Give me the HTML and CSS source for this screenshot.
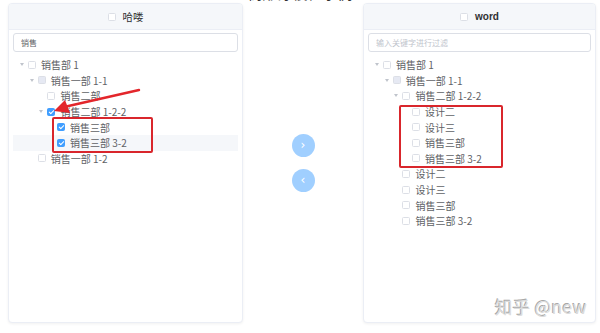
FILE: index.html
```html
<!DOCTYPE html>
<html lang="zh-CN">
<head>
    <meta charset="UTF-8">
    <title>树形穿梭框</title>
    <link rel="stylesheet" href="styles.css">
</head>
<body>
<div class="page">
    <div class="title"><span>树形穿梭框示例</span></div>

    <div class="transfer">
        <div class="panel panel-left">
            <div class="panel-header">
                <span class="cb"></span>
                <span class="header-text">哈喽</span>
            </div>
            <div class="panel-body">
                <div class="filter"><input type="text" value="销售"></div>
                <div class="tree">
                    <div class="node lv1"><span class="caret"></span><span class="cb"></span><span class="label">销售部 1</span></div>
                    <div class="node lv2"><span class="caret"></span><span class="cb half"></span><span class="label">销售一部 1-1</span></div>
                    <div class="node lv3"><span class="caret leaf"></span><span class="cb"></span><span class="label">销售二部</span></div>
                    <div class="node lv3"><span class="caret"></span><span class="cb checked"></span><span class="label">销售二部 1-2-2</span></div>
                    <div class="node lv4"><span class="caret leaf"></span><span class="cb checked"></span><span class="label">销售三部</span></div>
                    <div class="node lv4 hover"><span class="caret leaf"></span><span class="cb checked"></span><span class="label">销售三部 3-2</span></div>
                    <div class="node lv2"><span class="caret leaf"></span><span class="cb"></span><span class="label">销售一部 1-2</span></div>
                </div>
            </div>
        </div>

        <div class="buttons">
            <button class="circle-btn">&#8250;</button>
            <button class="circle-btn">&#8249;</button>
        </div>

        <div class="panel panel-right">
            <div class="panel-header">
                <span class="cb"></span>
                <span class="header-text">word</span>
            </div>
            <div class="panel-body">
                <div class="filter"><input type="text" placeholder="输入关键字进行过滤"></div>
                <div class="tree">
                    <div class="node lv1"><span class="caret"></span><span class="cb"></span><span class="label">销售部 1</span></div>
                    <div class="node lv2"><span class="caret"></span><span class="cb half"></span><span class="label">销售一部 1-1</span></div>
                    <div class="node lv3"><span class="caret"></span><span class="cb"></span><span class="label">销售二部 1-2-2</span></div>
                    <div class="node lv4"><span class="caret leaf"></span><span class="cb"></span><span class="label">设计二</span></div>
                    <div class="node lv4"><span class="caret leaf"></span><span class="cb"></span><span class="label">设计三</span></div>
                    <div class="node lv4"><span class="caret leaf"></span><span class="cb"></span><span class="label">销售三部</span></div>
                    <div class="node lv4"><span class="caret leaf"></span><span class="cb"></span><span class="label">销售三部 3-2</span></div>
                    <div class="node lv3"><span class="caret leaf"></span><span class="cb"></span><span class="label">设计二</span></div>
                    <div class="node lv3"><span class="caret leaf"></span><span class="cb"></span><span class="label">设计三</span></div>
                    <div class="node lv3"><span class="caret leaf"></span><span class="cb"></span><span class="label">销售三部</span></div>
                    <div class="node lv3"><span class="caret leaf"></span><span class="cb"></span><span class="label">销售三部 3-2</span></div>
                </div>
            </div>
            <div class="watermark">知乎 @new</div>
        </div>
    </div>

    <!-- annotations drawn on top of the screenshot -->
    <div class="mark mark-left"></div>
    <div class="mark mark-right"></div>
    <svg class="arrow" width="600" height="333" viewBox="0 0 600 333">
        <line x1="139" y1="90" x2="64" y2="107" stroke="#e3262b" stroke-width="2.4" stroke-linecap="round"/>
        <polygon points="54,111 65,100 70,113" fill="#e3262b"/>
    </svg>
</div>
</body>
</html>
```

FILE: styles.css
```css
* {
    margin: 0;
    padding: 0;
    box-sizing: border-box;
}

body {
    background-color: #fff;
    font-family: "Noto Sans CJK SC", "Noto Sans", sans-serif;
    color: #606266;
}

.page {
    position: relative;
    width: 600px;
    height: 333px;
    overflow: hidden;
}

.title {
    height: 3px;
    overflow: hidden;
    text-align: center;
}

.title span {
    display: block;
    margin-top: -15px;
    font-size: 15px;
    line-height: 16px;
    color: #303133;
}

.transfer {
    display: flex;
    padding-left: 8px;
}

.panel {
    position: relative;
    height: 320px;
    border: 1px solid #ebeef5;
    border-radius: 4px;
    background-color: #fff;
    box-shadow: 0 1px 3px rgba(0,0,0,0.06);
    overflow: hidden;
}

.panel-left {
    width: 235px;
}

.panel-right {
    width: 233px;
}

.panel-header {
    display: flex;
    justify-content: center;
    align-items: center;
    gap: 7px;
    height: 26px;
    background-color: #f5f7fa;
    border-bottom: 1px solid #ebeef5;
}

.header-text {
    font-size: 10.5px;
    color: #303133;
}

.panel-right .header-text {
    font-family: "Liberation Sans", "Noto Sans CJK SC", sans-serif;
    font-weight: bold;
    font-size: 10px;
}

.panel-body {
    padding: 3px 4px 0;
}

.filter input {
    display: block;
    width: 100%;
    height: 19px;
    border: 1px solid #dcdfe6;
    border-radius: 3px;
    padding: 0 7px;
    font-family: "Noto Sans CJK SC", sans-serif;
    font-size: 8px;
    color: #606266;
    outline: none;
}

.filter input::placeholder {
    color: #c0c4cc;
}

.tree {
    margin-top: 5px;
}

.node {
    display: flex;
    align-items: center;
    height: 15.6px;
    font-size: 10px;
    white-space: nowrap;
}

.node.hover {
    background-color: #f5f7fa;
}

.lv1 { padding-left: 3px; }
.lv2 { padding-left: 12.7px; }
.lv3 { padding-left: 22.4px; }
.lv4 { padding-left: 32px; }

.caret {
    width: 12px;
    height: 8px;
    display: flex;
    justify-content: center;
    align-items: center;
}

.caret::before {
    content: "";
    border-left: 2.5px solid transparent;
    border-right: 2.5px solid transparent;
    border-top: 3px solid #c0c4cc;
}

.caret.leaf::before {
    display: none;
}

.cb {
    position: relative;
    display: inline-block;
    width: 8px;
    height: 8px;
    border: 1px solid #dcdfe6;
    border-radius: 1.5px;
    background-color: #fff;
    flex-shrink: 0;
}

.node .cb {
    margin-right: 5px;
}

.cb.half {
    background-color: #e6e9f3;
    border-color: #dcdfe6;
}

.cb.checked {
    background-color: #409eff;
    border-color: #409eff;
}

.cb.checked::after {
    content: "";
    position: absolute;
    left: 2px;
    top: 0;
    width: 2px;
    height: 4px;
    border: 1px solid #fff;
    border-left: 0;
    border-top: 0;
    transform: rotate(45deg);
}

.buttons {
    width: 120px;
    display: flex;
    flex-direction: column;
    justify-content: center;
    align-items: center;
    gap: 12px;
}

.circle-btn {
    width: 23px;
    height: 23px;
    border: none;
    border-radius: 50%;
    background-color: #a0cfff;
    color: #fff;
    font-family: "DejaVu Sans", sans-serif;
    font-size: 12px;
    line-height: 23px;
}

.watermark {
    position: absolute;
    right: 8px;
    bottom: 3px;
    font-size: 17.5px;
    color: #dcdcdc;
    text-shadow: -1px -1px 0 #a8a8a8;
    letter-spacing: 0.3px;
}

.mark {
    position: absolute;
    border: 2px solid #d9262c;
    border-radius: 2px;
}

.mark-left {
    left: 52px;
    top: 117px;
    width: 101px;
    height: 36px;
}

.mark-right {
    left: 399px;
    top: 105px;
    width: 104px;
    height: 63px;
}

.arrow {
    position: absolute;
    left: 0;
    top: 0;
}
```
